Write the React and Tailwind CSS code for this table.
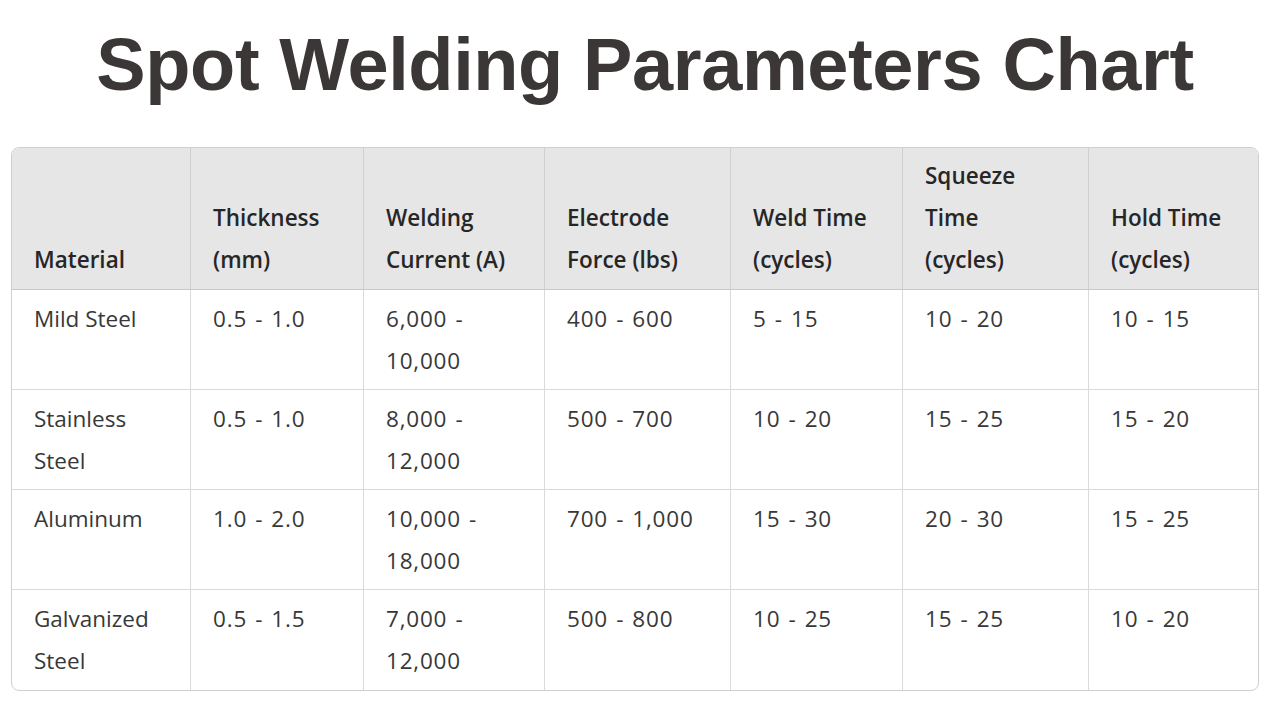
import React from "react";

const headers = [
  ["Material"],
  ["Thickness", "(mm)"],
  ["Welding", "Current (A)"],
  ["Electrode", "Force (lbs)"],
  ["Weld Time", "(cycles)"],
  ["Squeeze", "Time", "(cycles)"],
  ["Hold Time", "(cycles)"],
];

const rows = [
  [["Mild Steel"], ["0.5 - 1.0"], ["6,000 -", "10,000"], ["400 - 600"], ["5 - 15"], ["10 - 20"], ["10 - 15"]],
  [["Stainless", "Steel"], ["0.5 - 1.0"], ["8,000 -", "12,000"], ["500 - 700"], ["10 - 20"], ["15 - 25"], ["15 - 20"]],
  [["Aluminum"], ["1.0 - 2.0"], ["10,000 -", "18,000"], ["700 - 1,000"], ["15 - 30"], ["20 - 30"], ["15 - 25"]],
  [["Galvanized", "Steel"], ["0.5 - 1.5"], ["7,000 -", "12,000"], ["500 - 800"], ["10 - 25"], ["15 - 25"], ["10 - 20"]],
];

export default function App() {
  return (
    <div className="w-[1280px] h-[720px] bg-white overflow-hidden">
      <h1
        className="pt-[28px] pl-[10px] text-center text-[74px] leading-none font-bold text-[#3b3736] tracking-[-0.4px]"
        style={{ fontFamily: '"Liberation Sans", Arial, sans-serif' }}
      >
        Spot Welding Parameters Chart
      </h1>
      <div
        className="mt-[45px] ml-[11px] w-[1248px] border border-[#cfcfcf] rounded-[8px] overflow-hidden"
        style={{ fontFamily: '"Open Sans", "Noto Sans", sans-serif' }}
      >
        <div className="grid grid-cols-[179px_173px_181px_186px_172px_186px_169px] leading-[42px]">
          {headers.map((h, i) => (
            <div
              key={"h" + i}
              className={`bg-[#e6e6e6] h-[142px] flex flex-col justify-end px-[22px] py-[8px] text-[22.5px] font-semibold text-[#262626] border-b border-[#c8c8c8] ${i < 6 ? "border-r border-r-[#d0d0d0]" : ""}`}
            >
              {h.map((l, j) => (
                <div key={j} className="whitespace-nowrap">{l}</div>
              ))}
            </div>
          ))}
          {rows.map((r, ri) =>
            r.map((c, ci) => (
              <div
                key={ri + "-" + ci}
                className={`h-[100px] px-[22px] py-[8px] text-[22.5px] text-[#383838] border-[#dadada] ${ci < 6 ? "border-r" : ""} ${ri < 3 ? "border-b" : ""} ${ci > 0 ? "tracking-[0.8px] [word-spacing:1.5px]" : ""}`}
              >
                {c.map((l, j) => (
                  <div key={j} className="whitespace-nowrap">{l}</div>
                ))}
              </div>
            ))
          )}
        </div>
      </div>
    </div>
  );
}
